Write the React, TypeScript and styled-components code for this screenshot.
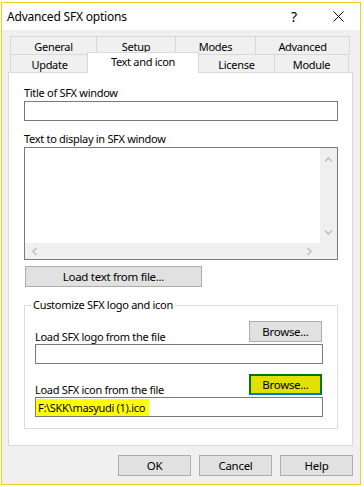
import styled, { createGlobalStyle } from "styled-components";

const Global = createGlobalStyle`
  body {
    margin: 0;
    background: #fff;
    font-family: "Noto Sans", "Open Sans", sans-serif;
    font-size: 11px;
    letter-spacing: -0.3px;
    color: #000;
  }
`;

const Window = styled.div`
  box-sizing: border-box;
  width: 360px;
  height: 483px;
  margin: 2px 0 0 1px;
  border: 1px solid #f3cf1c;
  background: #f0f0f0;
  display: flex;
  flex-direction: column;
`;

const TitleBar = styled.div`
  height: 27px;
  background: #fff;
  display: flex;
  align-items: center;
`;

const Title = styled.div`
  flex: 1;
  padding-left: 5px;
  font-size: 12px;
  letter-spacing: -0.2px;
`;

const CaptionButton = styled.div`
  width: 44px;
  height: 27px;
  display: flex;
  align-items: center;
  justify-content: center;
  font-size: 14px;
`;

const Body = styled.div`
  flex: 1;
  padding: 6px 7px 0 6px;
  display: flex;
  flex-direction: column;
`;

const TabRow = styled.div`
  display: flex;
  align-items: flex-end;
  margin-left: 2px;
  height: ${(p: { $h: number }) => p.$h}px;
`;

const Tab = styled.div<{ $w: number; $last?: boolean; $active?: boolean }>`
  box-sizing: border-box;
  width: ${(p) => p.$w}px;
  height: 100%;
  display: flex;
  align-items: center;
  justify-content: center;
  background: #f0f0f0;
  border-top: 1px solid #d9d9d9;
  border-left: 1px solid #d9d9d9;
  border-right: ${(p) => (p.$last ? "1px solid #d9d9d9" : "none")};
  padding-top: 1px;

  ${(p) =>
    p.$active &&
    `
    position: relative;
    z-index: 1;
    background: #fff;
    height: calc(100% + 3px);
    margin: 0 -1px -1px -1px;
    width: ${p.$w + 2}px;
    border-right: 1px solid #d9d9d9;
    padding-top: 0;
    padding-bottom: 3px;
  `}
`;

const Panel = styled.div`
  box-sizing: border-box;
  width: 345px;
  height: 374px;
  background: #fff;
  border: 1px solid #d9d9d9;
  padding: 12px 14px 0 15px;
  display: flex;
  flex-direction: column;
`;

const Label = styled.div<{ $gap?: number }>`
  line-height: 16px;
  margin-top: ${(p) => p.$gap ?? 0}px;
`;

const TextBox = styled.div<{ $w: number }>`
  box-sizing: border-box;
  width: ${(p) => p.$w}px;
  height: 20px;
  border: 1px solid #7a7a7a;
  background: #fff;
  display: flex;
  align-items: center;
`;

const Marked = styled.span`
  background: #ffff00;
  padding: 0 4px 0 2px;
  line-height: 17px;
`;

const TextArea = styled.div`
  box-sizing: border-box;
  width: 314px;
  height: 113px;
  border: 1px solid #7a7a7a;
  display: grid;
  grid-template-columns: 1fr 17px;
  grid-template-rows: 1fr 16px;
`;

const TextAreaField = styled.div`
  background: #fff;
`;

const ScrollBar = styled.div<{ $dir: "v" | "h" }>`
  background: #f0f0f0;
  display: flex;
  flex-direction: ${(p) => (p.$dir === "v" ? "column" : "row")};
  justify-content: space-between;
  align-items: center;
  padding: ${(p) => (p.$dir === "v" ? "7px 0 6px" : "0 6px 0 5px")};
`;

const Corner = styled.div`
  background: #f0f0f0;
`;

const Button = styled.div<{ $w: number; $focus?: boolean }>`
  box-sizing: border-box;
  width: ${(p) => p.$w}px;
  height: 21px;
  background: ${(p) => (p.$focus ? "#e1e100" : "#e1e1e1")};
  border: ${(p) => (p.$focus ? "2px solid #007800" : "1px solid #adadad")};
  border-bottom-color: ${(p) => (p.$focus ? "#0078d7" : "#adadad")};
  display: flex;
  align-items: center;
  justify-content: center;
  font-size: 11.5px;
`;

const LoadButton = styled(Button)`
  margin: 6px 0 0 1px;
`;

const Group = styled.fieldset`
  box-sizing: border-box;
  width: 314px;
  margin: 10px 0 0 0;
  padding: 8px 14px 11px 10px;
  border: 1px solid #dcdcdc;
  display: flex;
  flex-direction: column;
`;

const Legend = styled.legend`
  margin-left: -4px;
  padding: 0 2px;
  line-height: 16px;
`;

const FileRow = styled.div<{ $gap?: number }>`
  display: flex;
  justify-content: space-between;
  align-items: flex-end;
  margin-top: ${(p) => p.$gap ?? 0}px;
  margin-bottom: 2px;
  padding-right: 1px;

  ${Label} {
    margin-bottom: -3px;
  }
`;

const Footer = styled.div`
  display: flex;
  justify-content: flex-end;
  gap: 8px;
  margin-top: 9px;
`;

function Chevron({ dir }: { dir: "up" | "down" | "left" | "right" }) {
  const rot = { up: 0, right: 90, down: 180, left: 270 }[dir];
  return (
    <svg width="9" height="9" viewBox="0 0 9 9" style={{ transform: `rotate(${rot}deg)` }}>
      <path d="M1 6.5 L4.5 3 L8 6.5" fill="none" stroke="#c2c2c2" strokeWidth="1.6" />
    </svg>
  );
}

function CloseIcon() {
  return (
    <svg width="11" height="11" viewBox="0 0 11 11">
      <path d="M0.5 0.5 L10.5 10.5 M10.5 0.5 L0.5 10.5" stroke="#000" strokeWidth="1" />
    </svg>
  );
}

export default function App() {
  return (
    <>
      <Global />
      <Window>
        <TitleBar>
          <Title>Advanced SFX options</Title>
          <CaptionButton>?</CaptionButton>
          <CaptionButton>
            <CloseIcon />
          </CaptionButton>
        </TitleBar>
        <Body>
          <TabRow $h={18}>
            <Tab $w={86}>General</Tab>
            <Tab $w={79}>Setup</Tab>
            <Tab $w={80}>Modes</Tab>
            <Tab $w={95} $last>
              Advanced
            </Tab>
          </TabRow>
          <TabRow $h={18}>
            <Tab $w={78}>Update</Tab>
            <Tab $w={110} $active>
              Text and icon
            </Tab>
            <Tab $w={76}>License</Tab>
            <Tab $w={75} $last>
              Module
            </Tab>
          </TabRow>
          <Panel>
            <Label>Title of SFX window</Label>
            <TextBox $w={314} />
            <Label $gap={10}>Text to display in SFX window</Label>
            <TextArea>
              <TextAreaField />
              <ScrollBar $dir="v">
                <Chevron dir="up" />
                <Chevron dir="down" />
              </ScrollBar>
              <ScrollBar $dir="h">
                <Chevron dir="left" />
                <Chevron dir="right" />
              </ScrollBar>
              <Corner />
            </TextArea>
            <LoadButton $w={177}>Load text from file...</LoadButton>
            <Group>
              <Legend>Customize SFX logo and icon</Legend>
              <FileRow>
                <Label>Load SFX logo from the file</Label>
                <Button $w={73}>Browse...</Button>
              </FileRow>
              <TextBox $w={288} />
              <FileRow $gap={10}>
                <Label>Load SFX icon from the file</Label>
                <Button $w={73} $focus>
                  Browse...
                </Button>
              </FileRow>
              <TextBox $w={288}>
                <Marked>F:\SKK\masyudi (1).ico</Marked>
              </TextBox>
            </Group>
          </Panel>
          <Footer>
            <Button $w={73}>OK</Button>
            <Button $w={73}>Cancel</Button>
            <Button $w={73}>Help</Button>
          </Footer>
        </Body>
      </Window>
    </>
  );
}
